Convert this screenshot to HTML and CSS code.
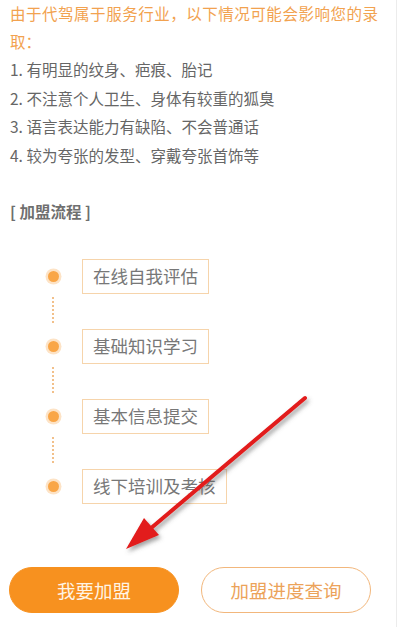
FILE: index.html
```html
<!DOCTYPE html>
<html lang="zh-CN">
<head>
<meta charset="utf-8">
<title>加盟流程</title>
<link rel="stylesheet" href="styles.css">
</head>
<body>
<div class="page">
  <section class="notice">
    <p class="lead">由于代驾属于服务行业，以下情况可能会影响您的录取：</p>
    <ul class="reqs">
      <li>1. 有明显的纹身、疤痕、胎记</li>
      <li>2. 不注意个人卫生、身体有较重的狐臭</li>
      <li>3. 语言表达能力有缺陷、不会普通话</li>
      <li>4. 较为夸张的发型、穿戴夸张首饰等</li>
    </ul>
  </section>

  <h2 class="sec-title">[ 加盟流程 ]</h2>

  <ol class="steps">
    <li class="step"><span class="dot"></span><span class="step-box">在线自我评估</span></li>
    <li class="link"><span class="dots"></span></li>
    <li class="step"><span class="dot"></span><span class="step-box">基础知识学习</span></li>
    <li class="link"><span class="dots"></span></li>
    <li class="step"><span class="dot"></span><span class="step-box">基本信息提交</span></li>
    <li class="link"><span class="dots"></span></li>
    <li class="step"><span class="dot"></span><span class="step-box">线下培训及考核</span></li>
  </ol>

  <div class="actions">
    <button class="btn btn-primary" type="button">我要加盟</button>
    <button class="btn btn-outline" type="button">加盟进度查询</button>
  </div>

  <svg class="arrow" width="402" height="627" viewBox="0 0 402 627" aria-hidden="true">
    <defs>
      <filter id="sh" x="-20%" y="-20%" width="140%" height="140%">
        <feDropShadow dx="2" dy="3" stdDeviation="2" flood-color="#555" flood-opacity="0.55"/>
      </filter>
    </defs>
    <g filter="url(#sh)">
      <line x1="305" y1="398" x2="150" y2="529" stroke="#e21a1a" stroke-width="4" stroke-linecap="round"/>
      <polygon points="126,549 144,518 159,535" fill="#e21a1a"/>
    </g>
  </svg>
</div>
</body>
</html>
```

FILE: styles.css
```css
* {
  box-sizing: border-box;
}

html, body {
  margin: 0;
  padding: 0;
  background: #ffffff;
}

body {
  font-family: "Noto Sans CJK SC", "Noto Sans", sans-serif;
  color: #666666;
}

.page {
  position: relative;
  width: 397px;
  height: 627px;
  overflow: hidden;
  border-right: 1px solid #ececec;
  padding: 0 18px 0 10px;
}

.notice {
  margin-top: -1px;
}

.lead {
  margin: 0;
  font-size: 15.5px;
  line-height: 28px;
  color: #f2a24f;
  text-align: justify;
}

.reqs {
  list-style: none;
  margin: 0;
  padding: 0;
}

.reqs li {
  font-size: 15.5px;
  line-height: 28.5px;
  color: #666666;
}

.sec-title {
  margin: 28px 0 0;
  font-size: 15.5px;
  line-height: 28px;
  font-weight: 700;
  color: #6f6f6f;
}

.steps {
  list-style: none;
  margin: 34px 0 0;
  padding: 0 0 0 31px;
}

.step {
  display: flex;
  align-items: center;
  height: 35px;
}

.dot {
  flex: none;
  width: 11px;
  height: 11px;
  margin: 0 23px 0 7px;
  border-radius: 50%;
  background: #f9a647;
  box-shadow: 0 0 0 2.5px #fde3c6;
}

.step-box {
  height: 35px;
  padding: 0 10px;
  border: 1.5px solid #f6d4ab;
  font-size: 17.5px;
  line-height: 32px;
  color: #777777;
  white-space: nowrap;
}

.link {
  height: 35px;
  padding: 2px 0 5px 11px;
}

.dots {
  display: block;
  width: 2px;
  height: 100%;
  background-image: radial-gradient(circle, #f2c08a 0.9px, transparent 1.1px);
  background-size: 2px 4px;
  background-repeat: repeat-y;
}

.actions {
  display: flex;
  gap: 22px;
  margin: 63px 0 0 -1px;
}

.btn {
  width: 170px;
  height: 46px;
  border-radius: 23px;
  font-family: "Noto Sans CJK SC", "Noto Sans", sans-serif;
  font-size: 18.5px;
  line-height: 1;
  padding: 0;
  cursor: pointer;
}

.btn-primary {
  background: #f7911f;
  border: 1.5px solid #f7911f;
  color: #fff4e4;
}

.btn-outline {
  background: #ffffff;
  border: 1.5px solid #f2b77c;
  color: #eca35a;
}

.arrow {
  position: absolute;
  left: 0;
  top: 0;
  pointer-events: none;
}
```
